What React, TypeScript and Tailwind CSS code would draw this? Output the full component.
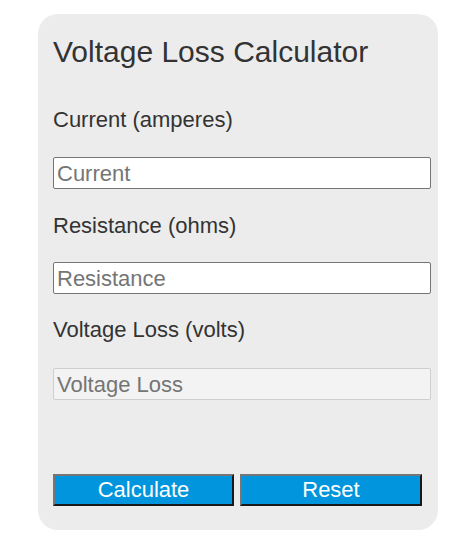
import React, { useState } from "react";

export default function App() {
  const [current, setCurrent] = useState("");
  const [resistance, setResistance] = useState("");
  const [loss, setLoss] = useState("");

  const calculate = () => {
    const i = parseFloat(current);
    const r = parseFloat(resistance);
    if (!isNaN(i) && !isNaN(r)) setLoss(String(i * r));
  };

  const reset = () => {
    setCurrent("");
    setResistance("");
    setLoss("");
  };

  const inputClass =
    "block w-[378px] h-[32px] px-[3px] bg-white border border-[#767676] rounded-[2px] text-[22px] text-[#333] placeholder:text-[#757575] outline-none";

  return (
    <div className="min-h-[550px] bg-white pt-[14px] font-['Liberation_Sans',Arial,sans-serif]">
      <div className="ml-[38px] w-[400px] h-[516px] rounded-[20px] bg-[#ececec] pl-[15px] pt-[21px] text-[#333]">
        <h1 className="text-[30px] leading-[34px] font-normal">Voltage Loss Calculator</h1>

        <label className="block mt-[38px] text-[22px] leading-[26px]">Current (amperes)</label>
        <input
          className={`${inputClass} mt-[24px]`}
          placeholder="Current"
          value={current}
          onChange={(e) => setCurrent(e.target.value)}
        />

        <label className="block mt-[24px] text-[22px] leading-[26px]">Resistance (ohms)</label>
        <input
          className={`${inputClass} mt-[23px]`}
          placeholder="Resistance"
          value={resistance}
          onChange={(e) => setResistance(e.target.value)}
        />

        <label className="block mt-[23px] text-[22px] leading-[26px]">Voltage Loss (volts)</label>
        <input
          className="block w-[378px] h-[32px] px-[3px] mt-[25px] bg-[#f3f3f3] border border-[#cfcfcf] rounded-[2px] text-[22px] text-[#333] placeholder:text-[#757575] outline-none"
          placeholder="Voltage Loss"
          value={loss}
          readOnly
        />

        <div className="flex gap-[6px] mt-[74px]">
          <button
            onClick={calculate}
            className="w-[181px] h-[32px] bg-[#0095dc] text-white text-[22px] leading-none border-2 border-t-[#767676] border-l-[#767676] border-b-[#1a1a1a] border-r-[#1a1a1a]"
          >
            Calculate
          </button>
          <button
            onClick={reset}
            className="w-[182px] h-[32px] bg-[#0095dc] text-white text-[22px] leading-none border-2 border-t-[#767676] border-l-[#767676] border-b-[#1a1a1a] border-r-[#1a1a1a]"
          >
            Reset
          </button>
        </div>
      </div>
    </div>
  );
}
